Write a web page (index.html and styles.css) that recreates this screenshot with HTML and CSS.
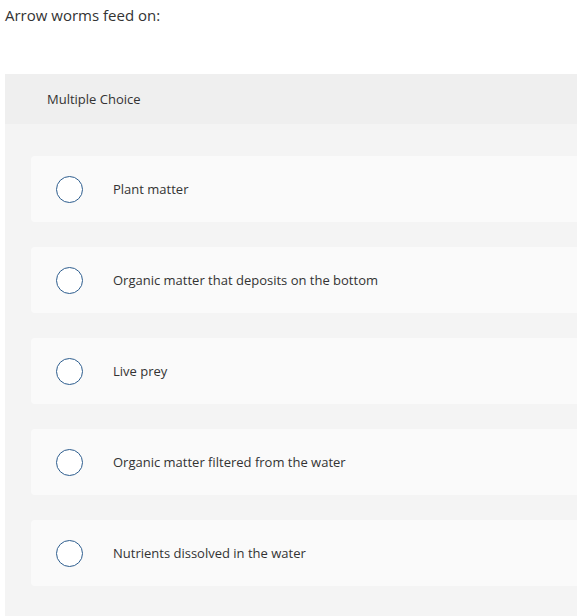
FILE: index.html
```html
<!DOCTYPE html>
<html>
<head>
<meta charset="utf-8">
<link rel="stylesheet" href="styles.css">
</head>
<body>
<div class="question">Arrow worms feed on:</div>
<div class="panel">
  <div class="panel-head">Multiple Choice</div>
  <div class="choices">
    <div class="choice"><span class="radio"></span><span class="label">Plant matter</span></div>
    <div class="choice"><span class="radio"></span><span class="label">Organic matter that deposits on the bottom</span></div>
    <div class="choice"><span class="radio"></span><span class="label">Live prey</span></div>
    <div class="choice"><span class="radio"></span><span class="label">Organic matter filtered from the water</span></div>
    <div class="choice"><span class="radio"></span><span class="label">Nutrients dissolved in the water</span></div>
  </div>
</div>
</body>
</html>
```
FILE: styles.css
```css
html, body { margin: 0; padding: 0; background: #fff; overflow: hidden; }
body { font-family: "Open Sans", "Liberation Sans", Arial, sans-serif; color: #333; width: 577px; }
.question { font-size: 15px; line-height: 18px; padding: 6px 0 0 5px; height: 74px; box-sizing: border-box; color: #333; }
.panel { margin-left: 5px; background: #f4f4f4; height: 542px; }
.panel-head { background: #efefef; height: 50px; display: flex; align-items: center; padding-left: 42px; font-size: 13px; color: #333; }
.choices { display: flex; flex-direction: column; gap: 25px; padding: 32px 0 0 26px; }
.choice { background: #fafafa; height: 66px; border-radius: 4px 0 0 4px; display: flex; align-items: center; padding-left: 25px; }
.radio { width: 25px; height: 25px; border: 1.5px solid #2d5d8e; border-radius: 50%; background: #fff; flex: none; }
.label { margin-left: 30px; font-size: 13px; color: #333; }
```
